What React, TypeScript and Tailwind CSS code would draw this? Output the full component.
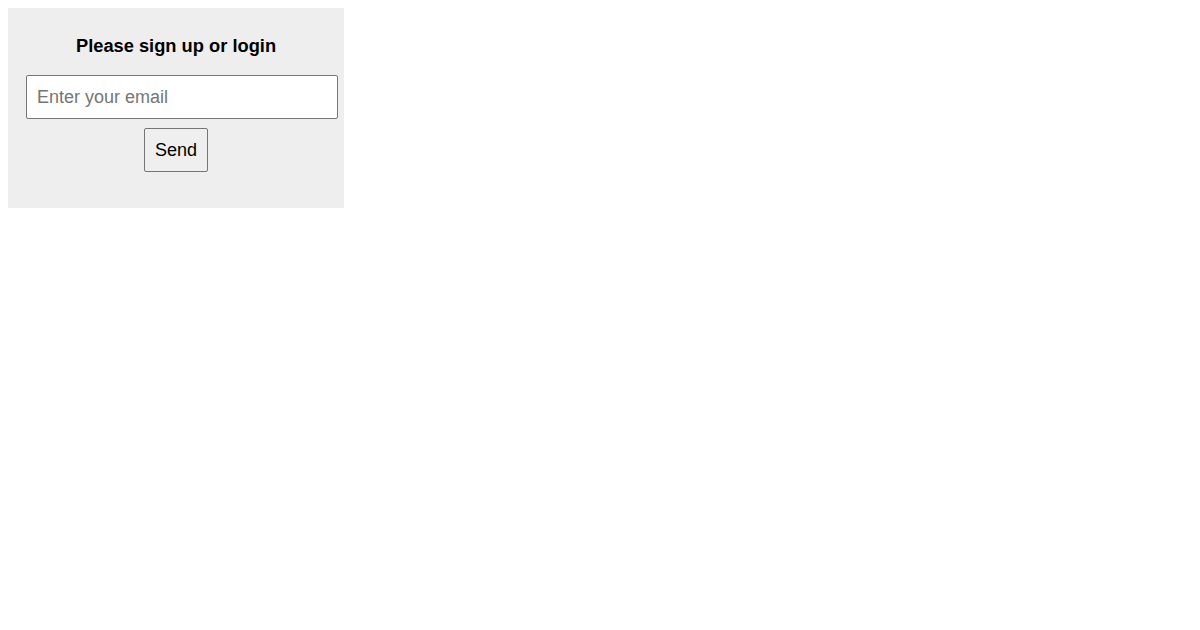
export default function App() {
  return (
    <div className="min-h-[630px] bg-white" style={{ fontFamily: '"Liberation Sans", Arial, sans-serif' }}>
      <div className="w-[336px] m-2 bg-[#eeeeee] px-[18px] pt-[18px] pb-[36px] flex flex-col items-center">
        <h2 className="mt-[9px] text-[18.3px] leading-[22px] font-bold text-black">Please sign up or login</h2>
        <input
          type="email"
          placeholder="Enter your email"
          className="mt-[18px] self-start w-[312px] h-[44px] box-border border border-[#767676] rounded-[2px] bg-white px-[10px] text-[18px] text-black placeholder:text-[#757575] outline-none"
        />
        <button className="mt-[9px] w-[64px] h-[44px] box-border border border-[#767676] rounded-[2px] bg-[#efefef] text-[18px] text-black">
          Send
        </button>
      </div>
    </div>
  );
}
